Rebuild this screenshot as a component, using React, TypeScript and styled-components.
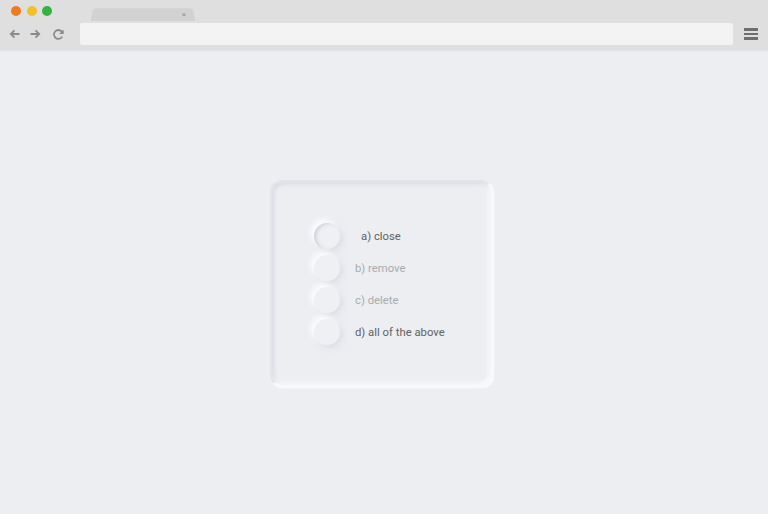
import React, { useState } from 'react';
import styled, { createGlobalStyle } from 'styled-components';

const Global = createGlobalStyle`
  html, body {
    margin: 0;
    padding: 0;
    background: #eceef2;
    font-family: Roboto, 'Liberation Sans', sans-serif;
  }
`;

const Page = styled.div`
  width: 768px;
  height: 514px;
  display: flex;
  flex-direction: column;
  overflow: hidden;
`;

const Chrome = styled.div`
  height: 50px;
  background: #dfdfdf;
  display: flex;
  flex-direction: column;
  flex-shrink: 0;
  box-shadow: 0 1px 2px rgba(0, 0, 0, 0.06);
`;

const TabRow = styled.div`
  height: 22px;
  display: flex;
  align-items: center;
  padding-left: 11px;
`;

const Dot = styled.span<{ color: string }>`
  width: 10px;
  height: 10px;
  border-radius: 50%;
  background: ${p => p.color};
  margin-right: 5.5px;
`;

const Tab = styled.div`
  margin-left: 34px;
  align-self: flex-end;
  width: 102px;
  height: 13px;
  margin-bottom: 1px;
  background: #d2d2d2;
  border-radius: 3px 3px 0 0;
  transform: perspective(40px) rotateX(8deg);
  display: flex;
  justify-content: flex-end;
  align-items: center;
  padding-right: 8px;
  box-sizing: border-box;
  color: #8a8a8a;
  font-size: 8px;
  line-height: 1;
`;

const ToolRow = styled.div`
  flex: 1;
  display: flex;
  align-items: center;
  padding: 0 10px 4px 9px;
`;

const NavIcons = styled.div`
  display: flex;
  align-items: center;
  gap: 8px;
  width: 71px;
`;

const Address = styled.div`
  flex: 1;
  height: 22px;
  background: #f3f3f3;
  border-radius: 2px;
`;

const Menu = styled.div`
  margin-left: 11px;
  display: flex;
  flex-direction: column;
  gap: 2px;

  span {
    display: block;
    width: 14px;
    height: 2.5px;
    background: #6f6f6f;
  }
`;

const Main = styled.main`
  flex: 1;
  display: flex;
  align-items: center;
  justify-content: center;
  padding-right: 5px;
  padding-top: 3px;
`;

const Card = styled.div`
  width: 223px;
  height: 207px;
  box-sizing: border-box;
  border-radius: 12px;
  background: #eceef2;
  border: 2px solid #f8f9fb;
  border-top-color: #e2e4e9;
  border-left-color: #e2e4e9;
  box-shadow: inset 2px 2px 4px rgba(190, 196, 208, 0.45),
    inset -2px -2px 4px rgba(255, 255, 255, 0.9),
    1px 1px 2px rgba(255, 255, 255, 0.9);
  padding: 41px 0 0 42px;
  display: flex;
  flex-direction: column;
  gap: 6px;
`;

const Option = styled.label`
  display: flex;
  align-items: center;
  height: 26px;
  cursor: pointer;
`;

const Knob = styled.span<{ checked: boolean }>`
  width: 26px;
  height: 26px;
  border-radius: 50%;
  background: #eef0f4;
  flex-shrink: 0;
  box-shadow: ${p =>
    p.checked
      ? 'inset 3px 1px 3px rgba(200, 205, 215, 0.7), 3px 3px 6px rgba(205, 210, 220, 0.55), -3px -3px 6px #ffffff'
      : '3px 3px 6px rgba(205, 210, 220, 0.55), -3px -3px 6px #ffffff'};
`;

const Label = styled.span<{ muted: boolean; shift: boolean }>`
  margin-left: ${p => (p.shift ? '21px' : '15px')};
  font-size: 11.3px;
  color: ${p => (p.muted ? '#a9abb0' : '#5f6165')};
`;

const ArrowIcon = ({ flip }: { flip?: boolean }) => (
  <svg width="12" height="12" viewBox="0 0 12 12" style={flip ? { transform: 'scaleX(-1)' } : undefined}>
    <path d="M10.5 6H2M5.5 2.3L1.8 6l3.7 3.7" stroke="#8a8a8a" strokeWidth="1.8" fill="none" />
  </svg>
);

const ReloadIcon = () => (
  <svg width="13" height="13" viewBox="0 0 13 13" style={{ marginLeft: 3 }}>
    <path d="M10.6 5.2A4.4 4.4 0 1 0 10.2 8.6" stroke="#8a8a8a" strokeWidth="1.8" fill="none" />
    <path d="M11.6 1.6v4.4H7.2z" fill="#8a8a8a" />
  </svg>
);

const options = [
  { text: 'a) close', muted: false },
  { text: 'b) remove', muted: true },
  { text: 'c) delete', muted: true },
  { text: 'd) all of the above', muted: false },
];

const App = () => {
  const [selected, setSelected] = useState(0);

  return (
    <Page>
      <Global />
      <Chrome>
        <TabRow>
          <Dot color="#ef7a1f" />
          <Dot color="#f2c122" />
          <Dot color="#34b43c" />
          <Tab>×</Tab>
        </TabRow>
        <ToolRow>
          <NavIcons>
            <ArrowIcon />
            <ArrowIcon flip />
            <ReloadIcon />
          </NavIcons>
          <Address />
          <Menu>
            <span />
            <span />
            <span />
          </Menu>
        </ToolRow>
      </Chrome>
      <Main>
        <Card>
          {options.map((o, i) => (
            <Option key={o.text} onClick={() => setSelected(i)}>
              <Knob checked={selected === i} />
              <Label muted={o.muted} shift={selected === i}>
                {o.text}
              </Label>
            </Option>
          ))}
        </Card>
      </Main>
    </Page>
  );
};

export default App;
